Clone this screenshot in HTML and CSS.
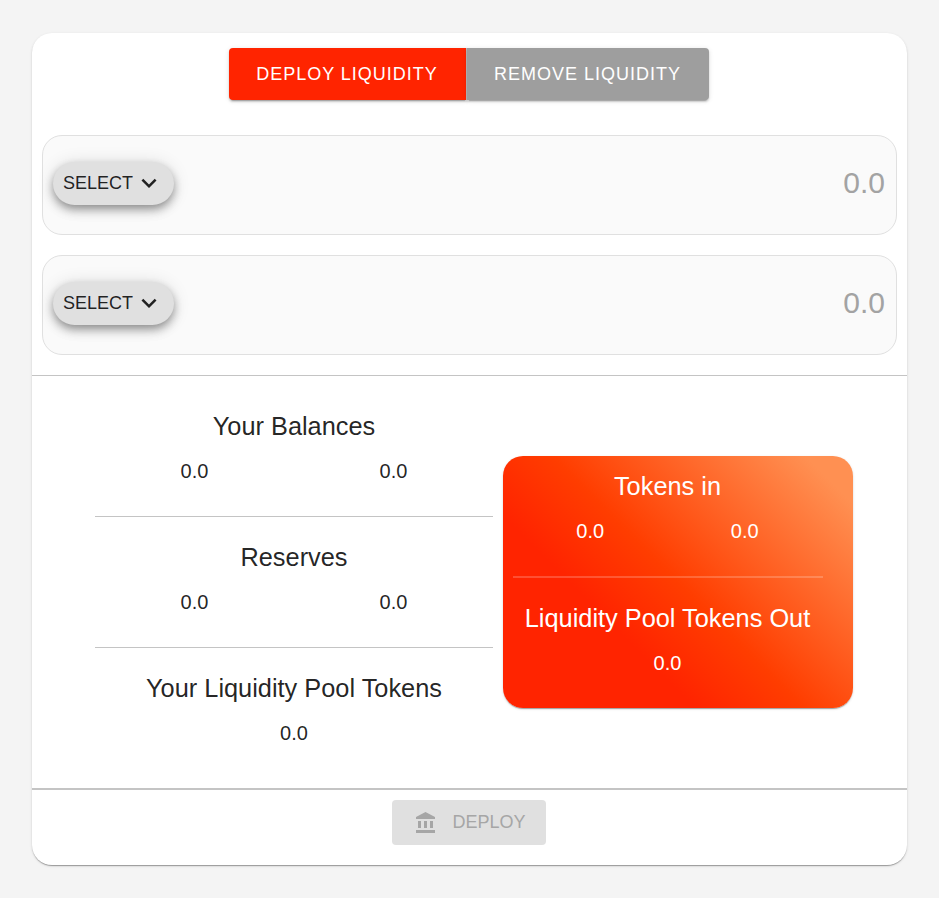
FILE: index.html
```html
<!DOCTYPE html>
<html lang="en">
<head>
    <meta charset="UTF-8">
    <title>Liquidity</title>
    <link rel="stylesheet" href="styles.css">
</head>
<body>
    <div class="card">
        <div class="tabs">
            <button class="tab tab-active">Deploy Liquidity</button>
            <button class="tab tab-idle">Remove Liquidity</button>
        </div>

        <div class="inputs">
            <div class="token-input">
                <button class="select-btn">
                    Select
                    <svg class="chevron" viewBox="0 0 24 24"><path d="M7.41 8.59 12 13.17l4.59-4.58L18 10l-6 6-6-6z"/></svg>
                </button>
                <span class="amount">0.0</span>
            </div>
            <div class="token-input">
                <button class="select-btn">
                    Select
                    <svg class="chevron" viewBox="0 0 24 24"><path d="M7.41 8.59 12 13.17l4.59-4.58L18 10l-6 6-6-6z"/></svg>
                </button>
                <span class="amount">0.0</span>
            </div>
        </div>

        <hr class="rule">

        <div class="details">
            <div class="stats">
                <section class="stat">
                    <h2>Your Balances</h2>
                    <div class="values"><span>0.0</span><span>0.0</span></div>
                </section>
                <hr class="stat-rule">
                <section class="stat">
                    <h2>Reserves</h2>
                    <div class="values"><span>0.0</span><span>0.0</span></div>
                </section>
                <hr class="stat-rule">
                <section class="stat">
                    <h2>Your Liquidity Pool Tokens</h2>
                    <div class="values"><span>0.0</span></div>
                </section>
            </div>

            <div class="summary">
                <section class="stat">
                    <h2>Tokens in</h2>
                    <div class="values"><span>0.0</span><span>0.0</span></div>
                </section>
                <hr class="summary-rule">
                <section class="stat">
                    <h2>Liquidity Pool Tokens Out</h2>
                    <div class="values"><span>0.0</span></div>
                </section>
            </div>
        </div>

        <hr class="rule rule-thick">

        <div class="actions">
            <button class="deploy-btn" disabled>
                <svg class="bank" viewBox="0 0 24 24"><path d="M4 10v7h3v-7H4zm6 0v7h3v-7h-3zM2 22h19v-3H2v3zm14-12v7h3v-7h-3zm-4.500-9L2 6v2h19V6l-9.500-5z"/></svg>
                Deploy
            </button>
        </div>
    </div>
</body>
</html>
```

FILE: styles.css
```css
* {
    margin: 0;
    padding: 0;
    box-sizing: border-box;
    font-family: "Liberation Sans", Arial, sans-serif;
}

body {
    background-color: #f4f4f4;
    min-height: 100vh;
    padding: 33px 32px 33px 32px;
}

.card {
    background-color: white;
    border-radius: 20px;
    height: 832px;
    box-shadow: 0 2px 1px -1px rgba(0,0,0,0.2), 0 1px 1px 0 rgba(0,0,0,0.14), 0 1px 3px 0 rgba(0,0,0,0.12);
    padding-top: 15px;
}

.tabs {
    display: flex;
    justify-content: center;
    margin-left: -2px;
}

.tab {
    height: 52px;
    border: none;
    color: white;
    font-size: 18px;
    letter-spacing: 1px;
    text-transform: uppercase;
    box-shadow: 0 3px 1px -2px rgba(0,0,0,0.2), 0 2px 2px 0 rgba(0,0,0,0.14), 0 1px 5px 0 rgba(0,0,0,0.12);
}

.tab-active {
    width: 238px;
    background-color: #ff2400;
    border-radius: 4px 0 0 4px;
    border-right: 1px solid #bdbdbd;
}

.tab-idle {
    width: 242px;
    background-color: #9e9e9e;
    border-radius: 0 4px 4px 0;
}

.inputs {
    display: flex;
    flex-direction: column;
    gap: 20px;
    margin: 35px 10px 20px;
}

.token-input {
    height: 100px;
    display: flex;
    align-items: center;
    justify-content: space-between;
    padding: 0 11px 4px 10px;
    background-color: #fafafa;
    border: 1px solid #e0e0e0;
    border-radius: 20px;
}

.select-btn {
    width: 121px;
    height: 43px;
    display: flex;
    align-items: center;
    padding-left: 10px;
    gap: 1px;
    border: none;
    border-radius: 22px;
    background-color: #e0e0e0;
    color: rgba(0,0,0,0.87);
    font-size: 18px;
    text-transform: uppercase;
    box-shadow: 0 4px 8px -1px rgba(0,0,0,0.3), 0 6px 12px 0 rgba(0,0,0,0.14), 0 1px 18px 0 rgba(0,0,0,0.12);
}

.chevron {
    width: 30px;
    height: 30px;
    fill: #212121;
}

.amount {
    color: #a3a3a3;
    font-size: 30px;
}

.rule {
    border: none;
    height: 1px;
    background-color: #c4c4c4;
}

.rule-thick {
    height: 2px;
}

.details {
    height: 412px;
    display: flex;
    align-items: flex-start;
    padding-left: 63px;
}

.stats {
    width: 398px;
    padding-top: 33px;
    color: rgba(0,0,0,0.87);
}

.stat {
    text-align: center;
}

.stat h2 {
    font-size: 25.35px;
    font-weight: 400;
    line-height: 34px;
}

.values {
    display: flex;
    justify-content: space-around;
    margin-top: 17px;
    font-size: 20px;
    line-height: 23px;
}

.stat-rule {
    border: none;
    height: 1px;
    background-color: #c4c4c4;
    margin: 33px 0 23px;
}

.summary {
    width: 350px;
    height: 252px;
    margin: 80px 0 0 10px;
    padding: 13px 31px 0 10px;
    color: white;
    border-radius: 20px;
    background: linear-gradient(225deg, #ff9052 8%, #ff3d00 50%, #ff2400 68%);
    box-shadow: 0 2px 1px -1px rgba(0,0,0,0.2), 0 1px 1px 0 rgba(0,0,0,0.14), 0 1px 3px 0 rgba(0,0,0,0.12);
}

.summary-rule {
    border: none;
    height: 2px;
    width: 310px;
    background-color: rgba(255,255,255,0.2);
    margin: 33px 0 23px;
}

.actions {
    display: flex;
    justify-content: center;
    padding-top: 10px;
    margin-left: -2px;
}

.deploy-btn {
    width: 154px;
    height: 45px;
    display: flex;
    align-items: center;
    justify-content: center;
    gap: 14px;
    padding-left: 3px;
    border: none;
    border-radius: 4px;
    background-color: #e0e0e0;
    color: #a6a6a6;
    font-size: 18px;
    text-transform: uppercase;
}

.bank {
    width: 24px;
    height: 24px;
    fill: #a6a6a6;
}
```
